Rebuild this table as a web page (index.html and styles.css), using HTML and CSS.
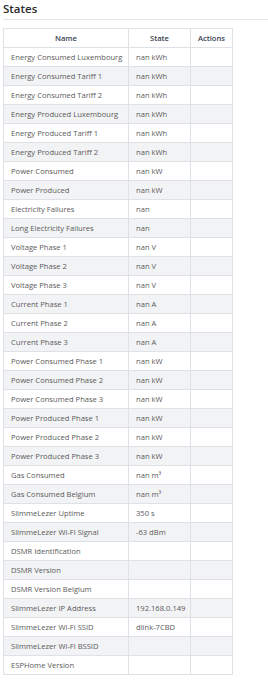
FILE: index.html
```html
<!DOCTYPE html>
<html>
<head>
<meta charset="utf-8">
<link rel="stylesheet" href="styles.css">
</head>
<body>
<h2 class="title">States</h2>
<table class="states">
<colgroup><col class="c-name"><col class="c-state"><col class="c-act"></colgroup>
<thead><tr><th>Name</th><th>State</th><th>Actions</th></tr></thead>
<tbody>
<tr><td>Energy Consumed Luxembourg</td><td>nan kWh</td><td></td></tr>
<tr><td>Energy Consumed Tariff 1</td><td>nan kWh</td><td></td></tr>
<tr><td>Energy Consumed Tariff 2</td><td>nan kWh</td><td></td></tr>
<tr><td>Energy Produced Luxembourg</td><td>nan kWh</td><td></td></tr>
<tr><td>Energy Produced Tariff 1</td><td>nan kWh</td><td></td></tr>
<tr><td>Energy Produced Tariff 2</td><td>nan kWh</td><td></td></tr>
<tr><td>Power Consumed</td><td>nan kW</td><td></td></tr>
<tr><td>Power Produced</td><td>nan kW</td><td></td></tr>
<tr><td>Electricity Failures</td><td>nan</td><td></td></tr>
<tr><td>Long Electricity Failures</td><td>nan</td><td></td></tr>
<tr><td>Voltage Phase 1</td><td>nan V</td><td></td></tr>
<tr><td>Voltage Phase 2</td><td>nan V</td><td></td></tr>
<tr><td>Voltage Phase 3</td><td>nan V</td><td></td></tr>
<tr><td>Current Phase 1</td><td>nan A</td><td></td></tr>
<tr><td>Current Phase 2</td><td>nan A</td><td></td></tr>
<tr><td>Current Phase 3</td><td>nan A</td><td></td></tr>
<tr><td>Power Consumed Phase 1</td><td>nan kW</td><td></td></tr>
<tr><td>Power Consumed Phase 2</td><td>nan kW</td><td></td></tr>
<tr><td>Power Consumed Phase 3</td><td>nan kW</td><td></td></tr>
<tr><td>Power Produced Phase 1</td><td>nan kW</td><td></td></tr>
<tr><td>Power Produced Phase 2</td><td>nan kW</td><td></td></tr>
<tr><td>Power Produced Phase 3</td><td>nan kW</td><td></td></tr>
<tr><td>Gas Consumed</td><td>nan m³</td><td></td></tr>
<tr><td>Gas Consumed Belgium</td><td>nan m³</td><td></td></tr>
<tr><td>SlimmeLezer Uptime</td><td>350 s</td><td></td></tr>
<tr><td>SlimmeLezer Wi-Fi Signal</td><td>-63 dBm</td><td></td></tr>
<tr><td>DSMR Identification</td><td></td><td></td></tr>
<tr><td>DSMR Version</td><td></td><td></td></tr>
<tr><td>DSMR Version Belgium</td><td></td><td></td></tr>
<tr><td>SlimmeLezer IP Address</td><td>192.168.0.149</td><td></td></tr>
<tr><td>SlimmeLezer Wi-Fi SSID</td><td>dlink-7CBD</td><td></td></tr>
<tr><td>SlimmeLezer Wi-Fi BSSID</td><td></td><td></td></tr>
<tr><td>ESPHome Version</td><td></td><td></td></tr>
</tbody>
</table>
</body>
</html>
```
FILE: styles.css
```css
html, body {
  margin: 0;
  padding: 0;
  background: #fff;
}
body {
  padding: 0 0 0 3px;
  font-family: "Open Sans", "Noto Sans", sans-serif;
  color: #5a5a5a;
}
.title {
  margin: 0;
  font-size: 11.5px;
  font-weight: 600;
  color: #2a2a2a;
  line-height: 18px;
  height: 20px;
  border-bottom: 1px solid #e6e6e6;
  box-sizing: border-box;
}
.states {
  margin-top: 8px;
  border-collapse: collapse;
  table-layout: fixed;
  width: 229px;
  font-size: 7.6px;
}
.c-name { width: 125px; }
.c-state { width: 62px; }
.c-act { width: 42px; }
.states th, .states td {
  border: 1px solid #dee2e6;
  height: 19px;
  padding: 0 0 0 7px;
  box-sizing: border-box;
  white-space: nowrap;
  overflow: hidden;
  line-height: 18px;
  text-align: left;
}
.states th {
  text-align: center;
  padding: 0;
  font-weight: 600;
  color: #3a4450;
}
.states tbody tr:nth-child(even) td {
  background: #f2f3f5;
}
```
